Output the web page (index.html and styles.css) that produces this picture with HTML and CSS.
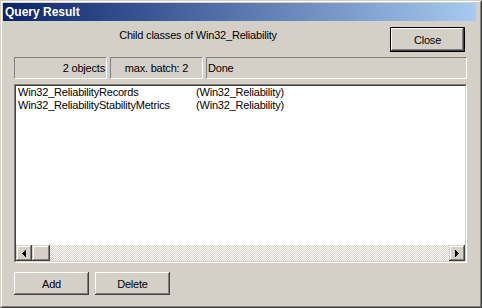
FILE: index.html
```html
<!DOCTYPE html>
<html>
<head>
<meta charset="utf-8">
<link rel="stylesheet" href="styles.css">
</head>
<body>
<div class="window">
  <div class="frame">
    <div class="titlebar"><span class="title">Query Result</span></div>
    <div class="content">
      <div class="head">
        <div class="caption">Child classes of Win32_Reliability</div>
        <button class="btn btn-default">Close</button>
      </div>
      <div class="status">
        <div class="panel panel-count">2 objects</div>
        <div class="panel panel-batch">max. batch: 2</div>
        <div class="panel panel-state">Done</div>
      </div>
      <div class="list">
        <div class="list-inner">
          <div class="items">
            <div class="row"><span class="col-name">Win32_ReliabilityRecords</span><span class="col-parent">(Win32_Reliability)</span></div>
            <div class="row"><span class="col-name">Win32_ReliabilityStabilityMetrics</span><span class="col-parent">(Win32_Reliability)</span></div>
          </div>
          <div class="hscroll">
            <div class="sbtn"><svg width="4" height="7" viewBox="0 0 4 7" shape-rendering="crispEdges"><path d="M3 0h1v7h-1z M2 1h1v5h-1z M1 2h1v3h-1z M0 3h1v1h-1z" fill="#000"/></svg></div>
            <div class="thumb"></div>
            <div class="track"></div>
            <div class="sbtn"><svg width="4" height="7" viewBox="0 0 4 7" shape-rendering="crispEdges"><path d="M0 0h1v7h-1z M1 1h1v5h-1z M2 2h1v3h-1z M3 3h1v1h-1z" fill="#000"/></svg></div>
          </div>
        </div>
      </div>
      <div class="actions">
        <button class="btn">Add</button>
        <button class="btn">Delete</button>
      </div>
    </div>
  </div>
</div>
</body>
</html>
```

FILE: styles.css
```css
html, body {
  margin: 0;
  padding: 0;
  background: #d4d0c8;
}

body {
  font-family: "Liberation Sans", Arial, sans-serif;
  font-size: 11px;
  letter-spacing: -0.2px;
  color: #000;
}

.window {
  box-sizing: border-box;
  width: 482px;
  height: 308px;
  border: 1px solid;
  border-color: #d4d0c8 #404040 #404040 #d4d0c8;
  background: #d4d0c8;
}

.frame {
  box-sizing: border-box;
  height: 100%;
  border: 1px solid;
  border-color: #fff #808080 #808080 #fff;
  padding: 1px 4px 1px 1px;
  display: flex;
  flex-direction: column;
}

.titlebar {
  height: 18px;
  flex: none;
  display: flex;
  align-items: center;
  padding-left: 2px;
  background: linear-gradient(to right, #0a246a, #a6caf0);
}

.title {
  color: #fff;
  font-weight: bold;
  font-size: 12px;
  letter-spacing: 0;
  line-height: 18px;
}

.content {
  padding: 6px 9px 0 11px;
  display: flex;
  flex-direction: column;
}

.head {
  display: flex;
  height: 25px;
}

.caption {
  flex: 1;
  margin-right: 8px;
  padding-top: 2px;
  line-height: 13px;
  text-align: center;
}

.btn {
  font-family: inherit;
  font-size: 11px;
  letter-spacing: -0.2px;
  color: #000;
  background: #d4d0c8;
  border: none;
  margin: 0;
  padding: 0;
  width: 75px;
  height: 23px;
  box-sizing: border-box;
  box-shadow: inset -1px -1px #404040, inset 1px 1px #fff, inset -2px -2px #808080, inset 2px 2px #d4d0c8;
}

.btn-default {
  height: 25px;
  margin-right: 2px;
  border: 1px solid #000;
}

.status {
  display: flex;
  gap: 3px;
  height: 22px;
  margin-top: 5px;
}

.panel {
  box-sizing: border-box;
  height: 22px;
  border: 1px solid;
  border-color: #808080 #fff #fff #808080;
  line-height: 20px;
  white-space: nowrap;
}

.panel-count {
  width: 93px;
  text-align: right;
  padding-right: 1px;
}

.panel-batch {
  width: 93px;
  text-align: center;
}

.panel-state {
  flex: 1;
  padding-left: 1px;
}

.list {
  box-sizing: border-box;
  height: 179px;
  margin-top: 5px;
  border: 1px solid;
  border-color: #808080 #fff #fff #808080;
}

.list-inner {
  box-sizing: border-box;
  height: 100%;
  border: 1px solid;
  border-color: #404040 #d4d0c8 #d4d0c8 #404040;
  background: #fff;
  display: flex;
  flex-direction: column;
}

.items {
  flex: 1;
  padding-left: 2px;
}

.row {
  display: flex;
  line-height: 13px;
  white-space: nowrap;
}

.col-name {
  width: 178px;
}

.hscroll {
  height: 16px;
  display: flex;
  flex: none;
}

.sbtn, .thumb {
  width: 16px;
  height: 16px;
  box-sizing: border-box;
  background: #d4d0c8;
  box-shadow: inset -1px -1px #404040, inset 1px 1px #d4d0c8, inset -2px -2px #808080, inset 2px 2px #fff;
  display: flex;
  align-items: center;
  justify-content: center;
}

.sbtn svg {
  display: block;
  margin-right: 1px;
}

.thumb {
  width: 18px;
}

.track {
  flex: 1;
  background: repeating-conic-gradient(#fff 0 25%, #d4d0c8 0 50%) 0 0 / 2px 2px;
}

.actions {
  display: flex;
  gap: 6px;
  margin-top: 9px;
}
```
